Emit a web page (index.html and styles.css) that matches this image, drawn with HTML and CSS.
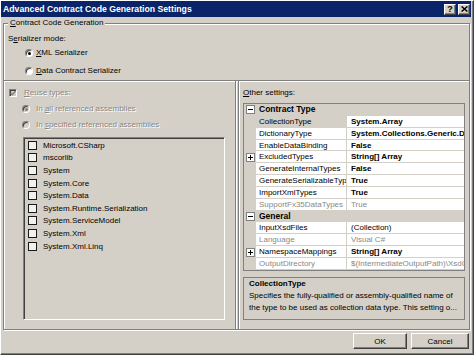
FILE: index.html
```html
<!DOCTYPE html>
<html lang="en">
<head>
    <meta charset="UTF-8">
    <title>Advanced Contract Code Generation Settings</title>
    <link rel="stylesheet" href="styles.css">
</head>
<body>

<div class="window">
    <div class="titlebar">
        <span class="title">Advanced Contract Code Generation Settings</span>
        <span class="cap-btn">?</span>
        <span class="cap-btn">
            <svg width="7" height="6" viewBox="0 0 7 6"><path d="M0.6 0.5 L6.4 5.5 M6.4 0.5 L0.6 5.5" stroke="#000" stroke-width="1.5"/></svg>
        </span>
    </div>

    <fieldset class="group">
        <legend><u>C</u>ontract Code Generation</legend>

        <div class="serializer">
            <div class="caption">S<u>e</u>rializer mode:</div>
            <div class="radio-row first"><span class="radio checked"></span><span><u>X</u>ML Serializer</span></div>
            <div class="radio-row second"><span class="radio"></span><span><u>D</u>ata Contract Serializer</span></div>
        </div>

        <div class="split">
            <div class="pane left">
                <div class="check-row disabled">
                    <span class="check">
                        <svg width="6" height="6" viewBox="0 0 6 6"><path d="M0.5 2.8 L2.3 4.6 L5.5 0.9" fill="none" stroke="#808080" stroke-width="1.4"/></svg>
                    </span>
                    <span><u>R</u>euse types:</span>
                </div>
                <div class="radio-row disabled"><span class="radio checked"></span><span>In <u>a</u>ll referenced assemblies</span></div>
                <div class="radio-row disabled"><span class="radio"></span><span>In <u>s</u>pecified referenced assemblies</span></div>

                <ul class="assemblies">
                    <li><span class="box"></span>Microsoft.CSharp</li>
                    <li><span class="box"></span>mscorlib</li>
                    <li><span class="box"></span>System</li>
                    <li><span class="box"></span>System.Core</li>
                    <li><span class="box"></span>System.Data</li>
                    <li><span class="box"></span>System.Runtime.Serialization</li>
                    <li><span class="box"></span>System.ServiceModel</li>
                    <li><span class="box"></span>System.Xml</li>
                    <li><span class="box"></span>System.Xml.Linq</li>
                </ul>
            </div>

            <div class="pane right">
                <div class="caption"><u>O</u>ther settings:</div>

                <div class="propgrid">
                    <div class="pg-cat">
                        <span class="margin"><svg width="9" height="9" viewBox="0 0 9 9"><rect x="0.5" y="0.5" width="8" height="8" fill="#fff" stroke="#808080"/><path d="M2 4.5 H7" stroke="#000"/></svg></span>
                        <span class="cat-name">Contract Type</span>
                    </div>
                    <div class="pg-row selected">
                        <span class="margin"></span>
                        <span class="name">CollectionType</span>
                        <span class="value bold">System.Array</span>
                    </div>
                    <div class="pg-row">
                        <span class="margin"></span>
                        <span class="name">DictionaryType</span>
                        <span class="value bold">System.Collections.Generic.Dictionary`2</span>
                    </div>
                    <div class="pg-row">
                        <span class="margin"></span>
                        <span class="name">EnableDataBinding</span>
                        <span class="value bold">False</span>
                    </div>
                    <div class="pg-row">
                        <span class="margin"><svg width="9" height="9" viewBox="0 0 9 9"><rect x="0.5" y="0.5" width="8" height="8" fill="#fff" stroke="#808080"/><path d="M2 4.5 H7 M4.5 2 V7" stroke="#000"/></svg></span>
                        <span class="name">ExcludedTypes</span>
                        <span class="value bold">String[] Array</span>
                    </div>
                    <div class="pg-row">
                        <span class="margin"></span>
                        <span class="name">GenerateInternalTypes</span>
                        <span class="value bold">False</span>
                    </div>
                    <div class="pg-row">
                        <span class="margin"></span>
                        <span class="name">GenerateSerializableTypes</span>
                        <span class="value bold">True</span>
                    </div>
                    <div class="pg-row">
                        <span class="margin"></span>
                        <span class="name">ImportXmlTypes</span>
                        <span class="value bold">True</span>
                    </div>
                    <div class="pg-row readonly">
                        <span class="margin"></span>
                        <span class="name">SupportFx35DataTypes</span>
                        <span class="value">True</span>
                    </div>
                    <div class="pg-cat">
                        <span class="margin"><svg width="9" height="9" viewBox="0 0 9 9"><rect x="0.5" y="0.5" width="8" height="8" fill="#fff" stroke="#808080"/><path d="M2 4.5 H7" stroke="#000"/></svg></span>
                        <span class="cat-name">General</span>
                    </div>
                    <div class="pg-row">
                        <span class="margin"></span>
                        <span class="name">InputXsdFiles</span>
                        <span class="value">(Collection)</span>
                    </div>
                    <div class="pg-row readonly">
                        <span class="margin"></span>
                        <span class="name">Language</span>
                        <span class="value">Visual C#</span>
                    </div>
                    <div class="pg-row">
                        <span class="margin"><svg width="9" height="9" viewBox="0 0 9 9"><rect x="0.5" y="0.5" width="8" height="8" fill="#fff" stroke="#808080"/><path d="M2 4.5 H7 M4.5 2 V7" stroke="#000"/></svg></span>
                        <span class="name">NamespaceMappings</span>
                        <span class="value bold">String[] Array</span>
                    </div>
                    <div class="pg-row readonly">
                        <span class="margin"></span>
                        <span class="name">OutputDirectory</span>
                        <span class="value">$(IntermediateOutputPath)\XsdGeneratedCode</span>
                    </div>
                </div>

                <div class="desc">
                    <div class="desc-title">CollectionType</div>
                    <div class="desc-text">Specifies the fully-qualified or assembly-qualified name of the type to be used as collection data type. This setting o...</div>
                </div>
            </div>
        </div>
    </fieldset>

    <div class="buttons">
        <button type="button" class="ok">OK</button>
        <button type="button" class="cancel">Cancel</button>
    </div>
</div>

</body>
</html>
```

FILE: styles.css
```css
* {
    box-sizing: border-box;
}
body {
    margin: 0;
    background-color: #d4d0c8;
    font-family: "Liberation Sans", Arial, sans-serif;
    font-size: 8px;
    color: #000;
}
.window {
    width: 474px;
    height: 355px;
    border: 1px solid;
    border-color: #fff #404040 #404040 #fff;
    box-shadow: inset -1px -1px 0 #808080;
    display: flex;
    flex-direction: column;
}

/* title bar */
.titlebar {
    height: 16px;
    margin-right: 2px;
    padding: 0 1px 0 2px;
    background-color: #0a246a;
    display: flex;
    align-items: center;
    gap: 2px;
}
.title {
    flex: 1;
    color: #fff;
    font-weight: bold;
    font-size: 8.7px;
    white-space: nowrap;
}
.cap-btn {
    width: 12px;
    height: 11px;
    background-color: #d4d0c8;
    border: 1px solid;
    border-color: #fff #404040 #404040 #fff;
    box-shadow: inset -1px -1px 0 #808080;
    display: flex;
    align-items: center;
    justify-content: center;
    font-weight: bold;
    font-size: 9px;
    line-height: 1;
}

/* group box */
.group {
    margin: 0 3px 0 2px;
    padding: 0;
    min-width: 0;
    border: 1px solid #808080;
    box-shadow: inset 1px 1px 0 #fff, 1px 1px 0 #fff;
}
.group legend {
    margin-left: 4px;
    padding: 0 2px;
    line-height: 12px;
    background-color: #d4d0c8;
}
.caption {
    height: 12px;
    line-height: 12px;
}
.serializer {
    padding: 4px 0 3px 4px;
}
.radio-row,
.check-row {
    display: flex;
    align-items: center;
    height: 12px;
    line-height: 12px;
    white-space: nowrap;
}
.serializer .radio-row {
    margin-left: 17px;
    gap: 3px;
}
.serializer .first {
    margin-top: 2px;
}
.serializer .second {
    margin-top: 6px;
}
.radio {
    flex: none;
    width: 8px;
    height: 8px;
    border-radius: 50%;
    background-color: #fff;
    border: 1px solid;
    border-color: #808080 #fff #fff #808080;
    box-shadow: inset 1px 1px 0 #404040;
    display: flex;
    align-items: center;
    justify-content: center;
}
.radio.checked::after {
    content: "";
    width: 3px;
    height: 3px;
    border-radius: 50%;
    background-color: #000;
}
.disabled {
    color: #8a8884;
    text-shadow: 1px 1px 0 #fff;
}
.disabled .radio {
    background-color: #d4d0c8;
}
.disabled .radio.checked::after {
    background-color: #808080;
}
.check {
    flex: none;
    width: 8px;
    height: 8px;
    background-color: #d4d0c8;
    border: 1px solid;
    border-color: #808080 #fff #fff #808080;
    box-shadow: inset 1px 1px 0 #404040;
    display: flex;
    align-items: center;
    justify-content: center;
}

/* split area */
.split {
    display: flex;
    border-top: 1px solid #808080;
    box-shadow: inset 0 1px 0 #fff;
}
.pane.left {
    width: 232px;
    padding: 6px 0 9px 5px;
    border-right: 1px solid #808080;
    box-shadow: 1px 0 0 #fff;
}
.check-row {
    gap: 7px;
}
.pane.left .radio-row {
    margin-left: 13px;
    margin-top: 4px;
    gap: 6px;
}
.assemblies {
    list-style: none;
    margin: 6px 0 0 14px;
    padding: 1px 0 0 4px;
    width: 202px;
    height: 183px;
    border: 1px solid;
    border-color: #808080 #fff #fff #808080;
    box-shadow: inset 1px 1px 0 #404040, inset -1px -1px 0 #d4d0c8;
}
.assemblies li {
    height: 12.6px;
    display: flex;
    align-items: center;
    gap: 6px;
    white-space: nowrap;
}
.box {
    flex: none;
    width: 9px;
    height: 9px;
    border: 1.5px solid #1a1a1a;
    background-color: #f2f1ee;
}
.pane.right {
    flex: 1;
    margin-left: 2px;
    padding: 6px 4px 9px 4px;
    border-left: 1px solid #808080;
    box-shadow: inset 1px 0 0 #fff;
    display: flex;
    flex-direction: column;
}

/* property grid */
.propgrid {
    margin-top: 4px;
    height: 168px;
    border: 1px solid #808080;
    background-color: #fff;
    overflow: hidden;
}
.pg-row,
.pg-cat {
    display: grid;
    height: 11.85px;
    line-height: 11px;
    white-space: nowrap;
}
.pg-row {
    grid-template-columns: 12px 91px 1fr;
}
.pg-cat {
    grid-template-columns: 12px 1fr;
    background-color: #d4d0c8;
}
.margin {
    background-color: #d4d0c8;
    display: flex;
    align-items: center;
    justify-content: center;
}
.cat-name {
    padding-left: 3px;
    font-weight: bold;
    font-size: 8.5px;
}
.name,
.value {
    overflow: hidden;
    border-bottom: 1px solid #d4d0c8;
}
.name {
    padding-left: 3px;
    border-right: 1px solid #d4d0c8;
}
.value {
    padding-left: 4px;
}
.value.bold {
    font-weight: bold;
}
.selected .name {
    background-color: #d4d0c8;
}
.readonly .name,
.readonly .value {
    color: #8a8884;
}

/* description */
.desc {
    margin-top: 6px;
    height: 43px;
    border: 1px solid #808080;
    padding: 0 4px 0 5px;
}
.desc-title {
    font-weight: bold;
    line-height: 12px;
}
.desc-text {
    line-height: 11.5px;
}

/* buttons */
.buttons {
    display: flex;
    justify-content: flex-end;
    gap: 4px;
    margin-top: 3px;
    padding-right: 4px;
}
.buttons button {
    height: 16px;
    padding: 0;
    font: inherit;
    color: #000;
    background-color: #d4d0c8;
    border: 1px solid;
    border-color: #fff #404040 #404040 #fff;
    box-shadow: inset -1px -1px 0 #808080;
}
.ok {
    width: 54px;
}
.cancel {
    width: 58px;
}
```
